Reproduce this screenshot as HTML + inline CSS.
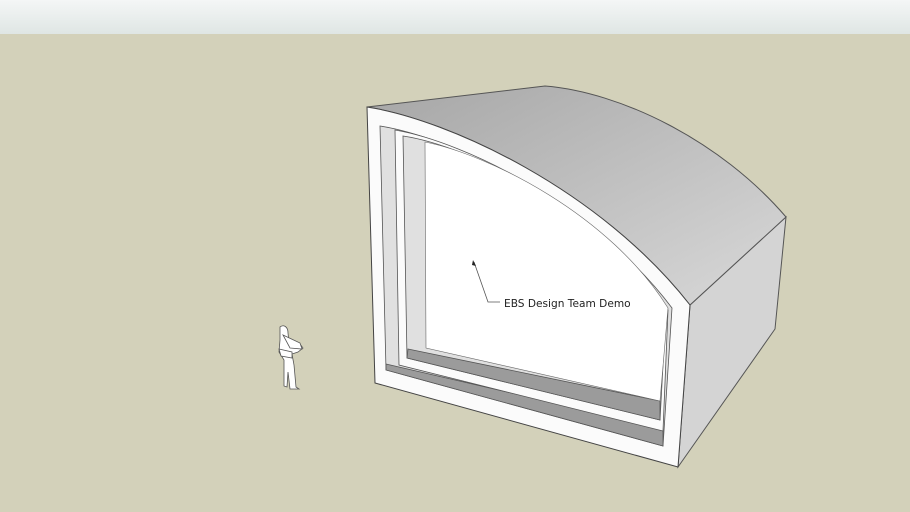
<!DOCTYPE html>
<html><head><meta charset="utf-8"><style>
html,body{margin:0;padding:0;width:910px;height:512px;overflow:hidden;background:#d3d1ba}
</style></head><body>
<svg width="910" height="512" viewBox="0 0 910 512" xmlns="http://www.w3.org/2000/svg">
<defs>
<linearGradient id="sky" x1="0" y1="0" x2="0" y2="1"><stop offset="0" stop-color="#f4f6f6"/><stop offset="1" stop-color="#dfe6e4"/></linearGradient>
<linearGradient id="roof" x1="0" y1="0" x2="1" y2="1"><stop offset="0" stop-color="#a6a6a6"/><stop offset="1" stop-color="#d9d9d9"/></linearGradient>
</defs>
<rect x="0" y="0" width="910" height="34" fill="url(#sky)"/>
<rect x="0" y="34" width="910" height="478" fill="#d3d1ba"/>
<path d="M690,305 L786,217 L775,329 L678,467 Z" fill="#d4d4d4" stroke="#555" stroke-width="1"/>
<path d="M367,107 L545,86 C620,92 720,140 786,217 L690,305 C600,190 450,120 367,107 Z" fill="url(#roof)" stroke="#555" stroke-width="1"/>
<path d="M367,107 C450,120 600,190 690,305 L678,467 L375,383 Z" fill="#fbfbfb" stroke="#444" stroke-width="1"/>
<path d="M380,126 C455,138 595,205 672,308 L663,446 L386,370 Z" fill="#e0e0e0" stroke="#555" stroke-width="0.8"/>
<path d="M386,364 L663,428 L663,446 L386,370 Z" fill="#9b9b9b" stroke="#555" stroke-width="0.8"/>
<path d="M395,130 C465,142 600,207 668,310 L663,431 L399,365 Z" fill="#fbfbfb" stroke="#555" stroke-width="0.8"/>
<path d="M403,136 C470,146 600,210 666,310 L660,420 L407,358 Z" fill="#e0e0e0" stroke="#555" stroke-width="0.8"/>
<path d="M408,349 L660,401 L660,420 L407,358 Z" fill="#9b9b9b" stroke="#555" stroke-width="0.8"/>
<path d="M425,142 C490,155 610,215 668,308 L660,401 L426,348 Z" fill="#ffffff" stroke="#666" stroke-width="0.6"/>
<path d="M474,262 L488,302 L500,302" fill="none" stroke="#555" stroke-width="0.8"/>
<path d="M473,260 L476,266 L472,265 Z" fill="#222"/>
<text x="504" y="307" font-family="DejaVu Sans, sans-serif" font-size="10.6" fill="#222">EBS Design Team Demo</text>
<g fill="#fff" stroke="#555" stroke-width="0.8">
<path d="M280,327 C284,324 288,327 288,333 L289,343 L300,344 L303,348 L298,352 L292,354 L294,365 L296,387 L299,389 L290,389 L288,372 L287,387 L284,386 L284,360 L279,352 L280,340 Z"/>
<path d="M283,335 L300,343 L302,349 L290,348 Z"/>
<path d="M279,349 L292,352 L292,358 L281,356 Z"/>
</g>
</svg>
</body></html>
